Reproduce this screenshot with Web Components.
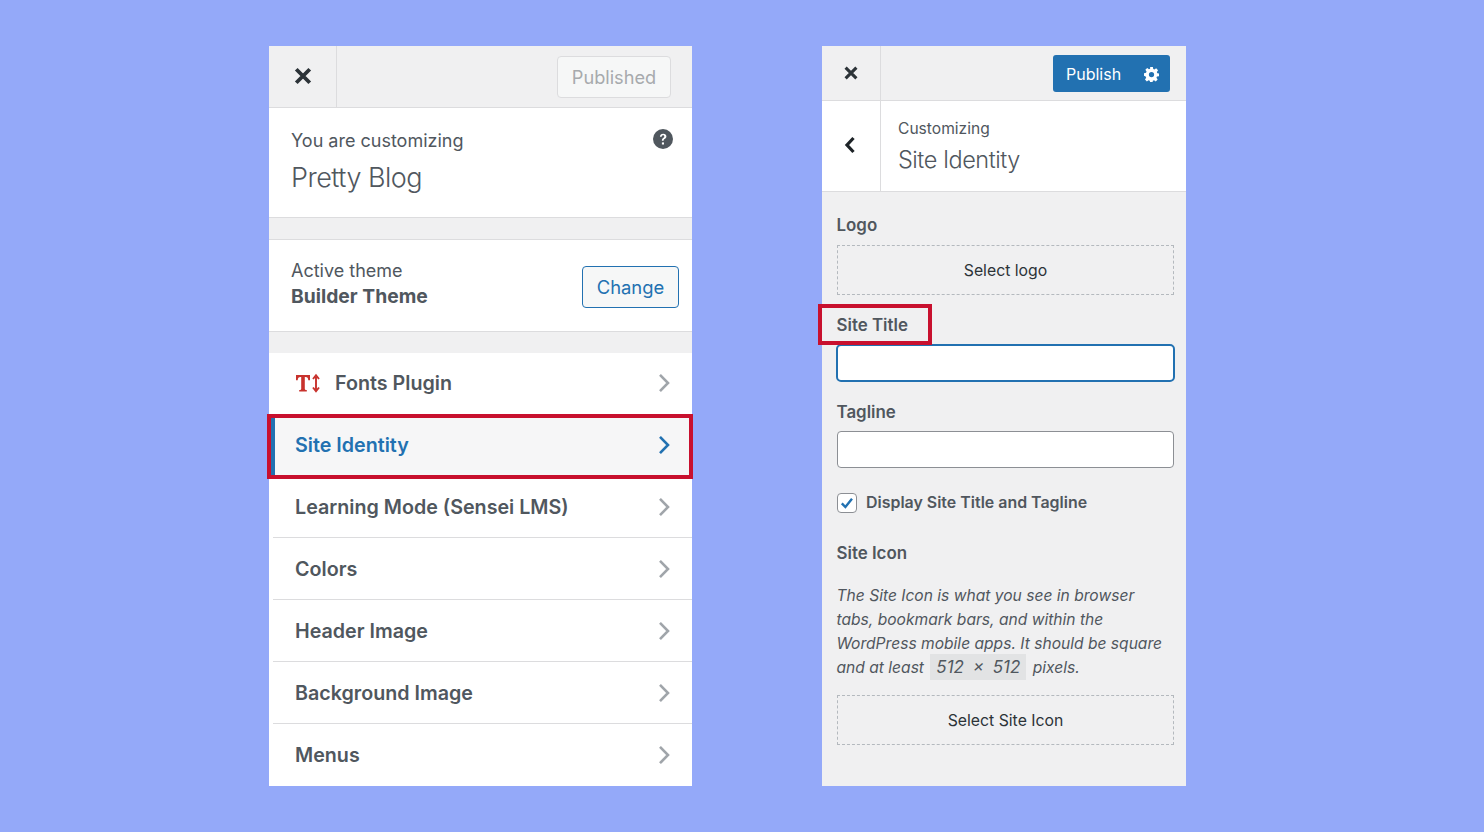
<!DOCTYPE html>
<html lang="en"><head><meta charset="utf-8"><title>Customizer</title>
<style>
html,body{margin:0;height:100%;overflow:hidden}
body{background:#94a9f9;font-family:Inter,"Liberation Sans",sans-serif;color:#50575e;-webkit-font-smoothing:antialiased}
main{display:flex;gap:130px;padding:46px 0 0 269px;box-sizing:border-box;height:832px}
</style></head><body>
<main>
<customizer-home></customizer-home>
<site-identity></site-identity>
</main>
<script>
const X=(s)=>`<svg width="${s}" height="${s}" viewBox="0 0 16 16" aria-hidden="true"><path d="M2.6 2.6 13.4 13.4M13.4 2.6 2.6 13.4" stroke="#2c3338" stroke-width="3.1" fill="none"/></svg>`;
const CHEV=(c)=>`<svg width="12" height="20" viewBox="0 0 12 20" aria-hidden="true"><path d="M2 1.800 10 10 2 18.200" stroke="${c}" stroke-width="2.600" fill="none"/></svg>`;
class NavRow extends HTMLElement{
  constructor(){super();const r=this.attachShadow({mode:'open'});
  r.innerHTML=`<style>
  :host{display:flex;align-items:center;height:62px;box-sizing:border-box;margin-left:4px;padding:0 22px 0 22px;background:#fff;border-bottom:1px solid #dcdcde;font:600 19.700px/24px Inter,"Liberation Sans",sans-serif;color:#50575e;justify-content:space-between;flex:none}
  :host([last]){border-bottom:0}
  :host([active]){margin-left:0;padding-left:26px;background:#f6f6f7;color:#2271b1;position:relative}
  .t{display:flex;align-items:center;gap:15px}
  ::slotted(svg){display:block}
  </style><span class="t"><slot name="icon"></slot><slot></slot></span>${CHEV(this.hasAttribute('active')?'#2271b1':'#a0a5aa')}`;}
}
customElements.define('nav-row',NavRow);
class RedBox extends HTMLElement{
  constructor(){super();this.attachShadow({mode:'open'}).innerHTML=`<style>
  :host{position:absolute;display:block;box-sizing:border-box;border:4px solid #c8102e;pointer-events:none}
  </style>`;}
}
customElements.define('red-box',RedBox);
class DropZone extends HTMLElement{
  constructor(){super();this.attachShadow({mode:'open'}).innerHTML=`<style>
  :host{display:flex;align-items:center;justify-content:center;box-sizing:border-box;height:50px;padding-top:1px;border:1px dashed #b4b9be;color:#2c3338;font:400 15.800px/20px Inter,"Liberation Sans",sans-serif}
  </style><slot></slot>`;}
}
customElements.define('drop-zone',DropZone);
class CustomizerHome extends HTMLElement{
  constructor(){super();this.attachShadow({mode:'open'}).innerHTML=`<style>
  :host{display:flex;flex-direction:column;width:423px;height:740px;background:#f0f0f1;position:relative;flex:none}
  *{box-sizing:border-box}
  header{display:flex;height:62px;border-bottom:1px solid #dcdcde;align-items:center;justify-content:space-between;padding-right:21px;flex:none}
  .x{width:68px;height:61px;border-right:1px solid #dcdcde;display:flex;align-items:center;justify-content:center;padding-bottom:1px}
  .pub{width:114px;height:42px;border:1px solid #dcdcde;border-radius:4px;background:#f6f7f7;color:#a7aaad;font:400 18.200px/40px Inter,"Liberation Sans",sans-serif;text-align:center;margin-top:1px}
  .info{height:110px;background:#fff;border-bottom:1px solid #dcdcde;padding:21px 18px 0 22px;position:relative;flex:none}
  .info .a{font:400 18px/24px Inter,"Liberation Sans",sans-serif;color:#50575e}
  .info .b{font:300 27px/36px Inter,"Liberation Sans",sans-serif;color:#50575e;margin-top:7px;letter-spacing:-.5px}
  .help{position:absolute;right:19px;top:21px;display:block}
  .gap{height:21px;flex:none}
  .theme{height:93px;background:#fff;border-top:1px solid #dcdcde;border-bottom:1px solid #dcdcde;padding:18px 13px 0 22px;display:flex;justify-content:space-between;flex:none}
  .theme .a{font:400 18px/26px Inter,"Liberation Sans",sans-serif}
  .theme .b{font:700 19.300px/25px Inter,"Liberation Sans",sans-serif}
  .chg{width:97px;height:42px;border:1px solid #2271b1;border-radius:4px;background:#f6f7f7;color:#2271b1;font:400 18.400px/40px Inter,"Liberation Sans",sans-serif;text-align:center;margin-top:8px}
  .nav{display:flex;flex-direction:column;background:#fff}
  .blue{position:absolute;left:2px;top:372px;width:4px;height:59px;background:#2271b1}
  red-box{left:-2px;top:368px;width:426px;height:65px}
  </style>
  <header><div class="x">${X(20)}</div><div class="pub">Published</div></header>
  <section class="info"><div class="a">You are customizing</div><div class="b">Pretty Blog</div>
  <svg class="help" width="20" height="20" viewBox="0 0 20 20" aria-hidden="true"><circle cx="10" cy="10" r="10" fill="#50575e"/><path d="M6.900 7.800C7 5.800 8.300 4.700 10.200 4.700c1.900 0 3.200 1.100 3.200 2.700 0 1.300-.8 2-1.700 2.600-.8.500-1.100.9-1.100 1.800H8.900c-.1-1.400.3-2.200 1.300-2.900.7-.5 1.100-.9 1.100-1.500 0-.7-.5-1.100-1.200-1.100-.8 0-1.300.5-1.400 1.500Z" fill="#fff"/><rect x="8.900" y="13.400" width="2.100" height="2.100" fill="#fff"/></svg></section>
  <div class="gap"></div>
  <section class="theme"><div><div class="a">Active theme</div><div class="b">Builder Theme</div></div><div class="chg">Change</div></section>
  <div class="gap"></div>
  <nav class="nav">
  <nav-row style="height:61px;border-bottom:0;padding-bottom:2px"><svg slot="icon" width="25" height="20" viewBox="0 0 25 20" aria-hidden="true"><path fill="#c8322d" d="M1 2h14v5.200h-1.700c-.2-2-.8-3.100-2.900-3.100H9.800v11.700c0 .8.500 1.200 2 1.200V18.500H4.200V17c1.500 0 2-.4 2-1.200V4.100H5.600C3.500 4.100 2.900 5.200 2.700 7.200H1Z"/><path d="M21 4v12.500M18 6l3-3.800L24 6M18 14.500l3 3.800 3-3.800" fill="none" stroke="#c8322d" stroke-width="1.900"/></svg>Fonts Plugin</nav-row>
  <nav-row active>Site Identity</nav-row>
  <nav-row>Learning Mode (Sensei LMS)</nav-row>
  <nav-row>Colors</nav-row>
  <nav-row>Header Image</nav-row>
  <nav-row>Background Image</nav-row>
  <nav-row last>Menus</nav-row>
  </nav>
  <div class="blue"></div><red-box></red-box>`;}
}
customElements.define('customizer-home',CustomizerHome);
class SiteIdentity extends HTMLElement{
  constructor(){super();this.attachShadow({mode:'open'}).innerHTML=`<style>
  :host{display:flex;flex-direction:column;width:364px;height:740px;background:#f0f0f1;position:relative;flex:none;font-family:Inter,"Liberation Sans",sans-serif}
  *{box-sizing:border-box}
  header{display:flex;height:55px;border-bottom:1px solid #dcdcde;align-items:center;justify-content:space-between;padding-right:16px;flex:none}
  .x{width:59px;height:54px;border-right:1px solid #dcdcde;display:flex;align-items:center;justify-content:center}
  .pub{width:117px;height:37px;border-radius:3px;background:#2271b1;color:#fff;font:400 16px/20px Inter,"Liberation Sans",sans-serif;display:flex;align-items:center;justify-content:space-between;padding:1px 11px 0 13px;margin-top:1px}
  .pub svg{display:block}
  .sec{display:flex;height:91px;background:#fff;border-bottom:1px solid #dcdcde;flex:none}
  .back{width:59px;border-right:1px solid #dcdcde;display:flex;align-items:center;justify-content:center;padding:0 2px 2px 0}
  .tt{padding:18px 0 0 17px}
  .tt .a{font:400 15.600px/20px Inter,"Liberation Sans",sans-serif;color:#50575e}
  .tt .b{font:300 23.500px/32px Inter,"Liberation Sans",sans-serif;color:#50575e;margin-top:5px;letter-spacing:-.5px}
  .body{padding:22px 12px 0 15px;display:flex;flex-direction:column;flex:1}
  label,.h{font:600 16.900px/22px Inter,"Liberation Sans",sans-serif;color:#50575e;display:block;margin-left:-.5px}
  drop-zone{margin-top:9px}
  .l2{margin-top:19px}
  .inp{height:37px;background:#fff;border-radius:4px;border:1px solid #8c8f94;margin-top:8px;display:block;width:100%}
  .foc{border:2px solid #2271b1;margin-top:8px;height:38px;margin-left:-1px;width:calc(100% + 2px);border-radius:5px}
  .l3{margin-top:19px}
  .chk{display:flex;align-items:center;gap:9px;margin-top:24px;font:600 15.950px/22px Inter,"Liberation Sans",sans-serif;color:#50575e}
  .chk svg{display:block;flex:none}
  .h{margin-top:28px}
  .d{font:italic 400 15.600px/24px Inter,"Liberation Sans",sans-serif;color:#50575e;margin:20px 0 0 -.5px}
  .d .ln{display:block;white-space:nowrap}
  .d .dim{background:#e2e3e4;padding:3px 6px;margin:0 2px;word-spacing:4px;font-size:17px;line-height:1}
  .si{margin-top:15px}
  red-box{left:-4px;top:258px;width:114px;height:41px}
  </style>
  <header><div class="x">${X(16)}</div><div class="pub">Publish<svg width="15" height="15" viewBox="0 0 20 20" aria-hidden="true"><path fill="#fff" fill-rule="evenodd" d="M8.200 0h3.600l.5 2.700 1.600.7 2.300-1.600 2.500 2.500-1.600 2.300.7 1.600 2.200.5v3.600l-2.700.5-.7 1.600 1.600 2.300-2.500 2.500-2.300-1.600-1.600.7-.5 2.700H8.200l-.5-2.700-1.600-.7-2.300 1.600-2.500-2.500 1.600-2.300-.7-1.600L0 11.800V8.200l2.700-.5.700-1.600-1.600-2.300 2.500-2.500 2.300 1.600 1.600-.7ZM10 6.500a3.500 3.500 0 1 0 0 7 3.500 3.500 0 0 0 0-7Z"/></svg></div></header>
  <section class="sec"><div class="back"><svg width="12" height="18" viewBox="0 0 12 18" aria-hidden="true"><path d="M9.500 2 3 9l6.500 7" stroke="#1d2327" stroke-width="3.200" fill="none"/></svg></div><div class="tt"><div class="a">Customizing</div><div class="b">Site Identity</div></div></section>
  <div class="body">
  <label>Logo</label><drop-zone>Select logo</drop-zone>
  <label class="l2">Site Title</label><div class="inp foc"></div>
  <label class="l3">Tagline</label><div class="inp"></div>
  <div class="chk"><svg width="20" height="20" viewBox="0 0 20 20" aria-hidden="true"><rect x=".5" y=".5" width="19" height="19" rx="3.500" fill="#fff" stroke="#8c8f94"/><path d="M4.800 10.300 8.400 14 15 5.800" stroke="#2271b1" stroke-width="2.400" fill="none"/></svg>Display Site Title and Tagline</div>
  <div class="h">Site Icon</div>
  <p class="d"><span class="ln">The Site Icon is what you see in browser</span><span class="ln">tabs, bookmark bars, and within the</span><span class="ln">WordPress mobile apps. It should be square</span><span class="ln">and at least <span class="dim">512 × 512</span> pixels.</span></p>
  <drop-zone class="si">Select Site Icon</drop-zone>
  </div>
  <red-box></red-box>`;}
}
customElements.define('site-identity',SiteIdentity);
</script>
</body></html>
